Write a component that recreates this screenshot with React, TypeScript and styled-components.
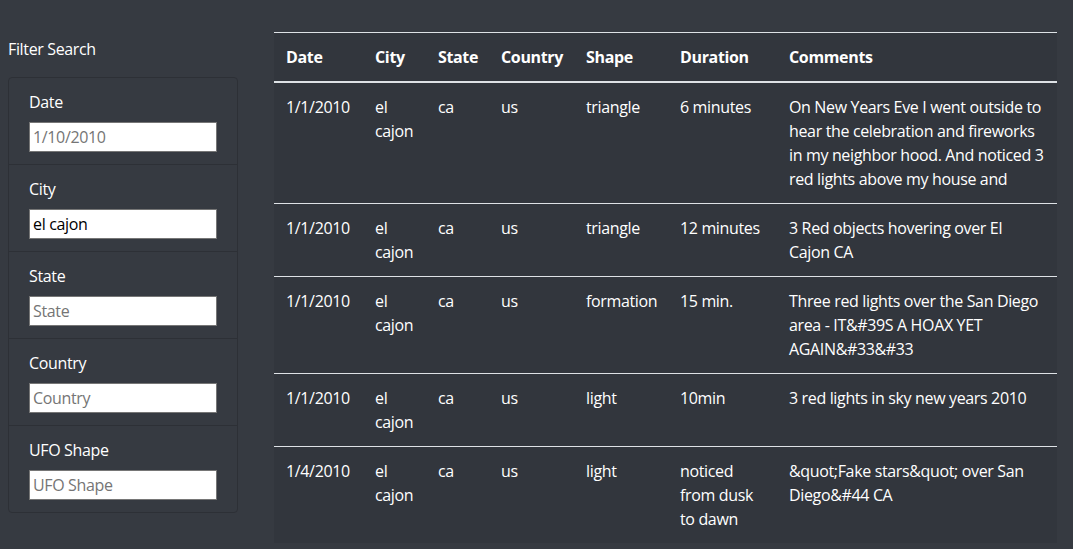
import React from "react";
import styled, { createGlobalStyle } from "styled-components";

const GlobalStyle = createGlobalStyle`
  html, body {
    margin: 0;
    padding: 0;
    background: #363a41;
  }

  body {
    font-family: "Open Sans", "Noto Sans", sans-serif;
    font-size: 16px;
    line-height: 24px;
    letter-spacing: -0.35px;
    color: #ffffff;
  }
`;

const Page = styled.div`
  display: flex;
  align-items: flex-start;
  gap: 36px;
  padding: 32px 16px 0 8px;
  min-height: 549px;
  box-sizing: border-box;
`;

const Sidebar = styled.aside`
  width: 230px;
  flex-shrink: 0;
  padding-top: 5px;
`;

const SidebarTitle = styled.div`
  margin-bottom: 16px;
`;

const FilterList = styled.ul`
  list-style: none;
  margin: 0;
  padding: 0;
  border: 1px solid #2d3036;
  border-radius: 4px;
`;

const FilterItem = styled.li`
  padding: 12px 20px;
  border-top: 1px solid #2d3036;

  &:first-child {
    border-top: none;
  }
`;

const FilterLabel = styled.label`
  display: block;
  margin-bottom: 8px;
`;

const FilterInput = styled.input`
  display: block;
  width: 100%;
  height: 30px;
  box-sizing: border-box;
  padding: 1px 3px;
  border: 1px solid #767676;
  background: #ffffff;
  color: #000000;
  font-family: "Open Sans", "Noto Sans", sans-serif;
  font-size: 16px;
  letter-spacing: -0.35px;

  &::placeholder {
    color: #757575;
  }
`;

const Table = styled.table`
  width: 783px;
  flex-shrink: 0;
  table-layout: fixed;
  border-collapse: collapse;
  background: #32363d;
`;

const HeadCell = styled.th<{ $w: number }>`
  width: ${(p) => p.$w}px;
  box-sizing: border-box;
  padding: 12px;
  text-align: left;
  font-weight: 700;
  vertical-align: bottom;
  border-top: 1px solid #dee2e6;
  border-bottom: 2px solid #dee2e6;
`;

const Row = styled.tr`
  & + & td {
    border-top: 1px solid #dee2e6;
  }
`;

const Cell = styled.td`
  padding: 12px;
  vertical-align: top;
`;

const columns = [
  { label: "Date", width: 89 },
  { label: "City", width: 63 },
  { label: "State", width: 63 },
  { label: "Country", width: 85 },
  { label: "Shape", width: 94 },
  { label: "Duration", width: 109 },
  { label: "Comments", width: 280 },
];

const filters = [
  { label: "Date", placeholder: "1/10/2010", value: "" },
  { label: "City", placeholder: "City", value: "el cajon" },
  { label: "State", placeholder: "State", value: "" },
  { label: "Country", placeholder: "Country", value: "" },
  { label: "UFO Shape", placeholder: "UFO Shape", value: "" },
];

const sightings = [
  ["1/1/2010", "el cajon", "ca", "us", "triangle", "6 minutes",
    "On New Years Eve I went outside to hear the celebration and fireworks in my neighbor hood. And noticed 3 red lights above my house and"],
  ["1/1/2010", "el cajon", "ca", "us", "triangle", "12 minutes",
    "3 Red objects hovering over El Cajon CA"],
  ["1/1/2010", "el cajon", "ca", "us", "formation", "15 min.",
    "Three red lights over the San Diego area - IT&#39S A HOAX YET AGAIN&#33&#33"],
  ["1/1/2010", "el cajon", "ca", "us", "light", "10min",
    "3 red lights in sky new years 2010"],
  ["1/4/2010", "el cajon", "ca", "us", "light", "noticed from dusk to dawn",
    "&quot;Fake stars&quot; over San Diego&#44 CA"],
];

export default function App() {
  return (
    <>
      <GlobalStyle />
      <Page>
        <Sidebar>
          <SidebarTitle>Filter Search</SidebarTitle>
          <FilterList>
            {filters.map((f) => (
              <FilterItem key={f.label}>
                <FilterLabel>{f.label}</FilterLabel>
                <FilterInput placeholder={f.placeholder} defaultValue={f.value} />
              </FilterItem>
            ))}
          </FilterList>
        </Sidebar>
        <Table>
          <thead>
            <tr>
              {columns.map((c) => (
                <HeadCell key={c.label} $w={c.width}>
                  {c.label}
                </HeadCell>
              ))}
            </tr>
          </thead>
          <tbody>
            {sightings.map((row, i) => (
              <Row key={i}>
                {row.map((value, j) => (
                  <Cell key={j}>{value}</Cell>
                ))}
              </Row>
            ))}
          </tbody>
        </Table>
      </Page>
    </>
  );
}
